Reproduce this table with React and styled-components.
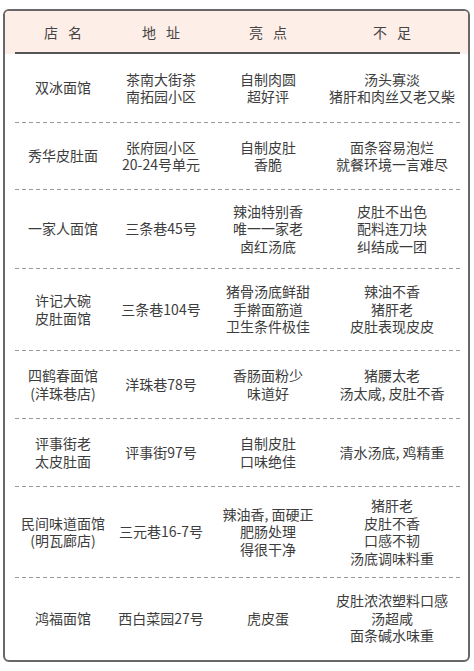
import React from "react";
import styled, { createGlobalStyle } from "styled-components";

const GlobalStyle = createGlobalStyle`
  html, body {
    margin: 0;
    padding: 0;
    background: #ffffff;
  }
  body {
    font-family: "Noto Sans CJK SC", "Noto Sans", sans-serif;
    color: #3d3d3d;
  }
`;

const Page = styled.div`
  padding: 9px 4px 0 3px;
`;

const Card = styled.div`
  border: 2px solid #676767;
  border-radius: 6px;
  overflow: hidden;
  background: #ffffff;
`;

const Header = styled.div`
  background: #fdeee8;
  padding: 0 8px 0 10px;
`;

const Grid = styled.div`
  display: grid;
  grid-template-columns: 96px 100px 114px 134px;
`;

const HeaderRow = styled(Grid)`
  height: 41px;
  border-bottom: 2px solid #555555;
`;

const HeaderCell = styled.div`
  display: flex;
  align-items: center;
  justify-content: center;
  font-size: 14px;
  color: #454545;
  letter-spacing: 10px;
  padding-left: 10px;
  padding-top: 1px;
`;

const Body = styled.div`
  padding: 0 8px 0 10px;
`;

const Row = styled(Grid)`
  height: ${(p) => p.h}px;
  background-image: ${(p) =>
    p.last
      ? "none"
      : "repeating-linear-gradient(to right, #9a9a9a 0 4px, transparent 4px 7px)"};
  background-size: 100% 1px;
  background-position: left bottom;
  background-repeat: no-repeat;
`;

const Cell = styled.div`
  display: flex;
  flex-direction: column;
  align-items: center;
  justify-content: center;
  font-size: 14px;
  white-space: nowrap;
  padding-bottom: 1px;
`;

const Line = styled.div`
  display: block;
  height: 17.5px;
  line-height: 17.5px;
`;

const rows = [
  { h: 69, name: ["双冰面馆"], addr: ["茶南大街茶", "南拓园小区"], good: ["自制肉圆", "超好评"], bad: ["汤头寡淡", "猪肝和肉丝又老又柴"] },
  { h: 67, name: ["秀华皮肚面"], addr: ["张府园小区", "20-24号单元"], good: ["自制皮肚", "香脆"], bad: ["面条容易泡烂", "就餐环境一言难尽"] },
  { h: 79, name: ["一家人面馆"], addr: ["三条巷45号"], good: ["辣油特别香", "唯一一家老", "卤红汤底"], bad: ["皮肚不出色", "配料连刀块", "纠结成一团"] },
  { h: 82, name: ["许记大碗", "皮肚面馆"], addr: ["三条巷104号"], good: ["猪骨汤底鲜甜", "手擀面筋道", "卫生条件极佳"], bad: ["辣油不香", "猪肝老", "皮肚表现皮皮"] },
  { h: 68, name: ["四鹤春面馆", "(洋珠巷店)"], addr: ["洋珠巷78号"], good: ["香肠面粉少", "味道好"], bad: ["猪腰太老", "汤太咸, 皮肚不香"] },
  { h: 68, name: ["评事街老", "太皮肚面"], addr: ["评事街97号"], good: ["自制皮肚", "口味绝佳"], bad: ["清水汤底, 鸡精重"] },
  { h: 91, name: ["民间味道面馆", "(明瓦廊店)"], addr: ["三元巷16-7号"], good: ["辣油香, 面硬正", "肥肠处理", "得很干净"], bad: ["猪肝老", "皮肚不香", "口感不韧", "汤底调味料重"] },
  { h: 82, name: ["鸿福面馆"], addr: ["西白菜园27号"], good: ["虎皮蛋"], bad: ["皮肚浓浓塑料口感", "汤超咸", "面条碱水味重"] },
];

const Lines = ({ items }) => (
  <Cell>
    {items.map((t, i) => (
      <Line key={i}>{t}</Line>
    ))}
  </Cell>
);

export default function App() {
  return (
    <Page>
      <GlobalStyle />
      <Card>
        <Header>
          <HeaderRow>
            <HeaderCell>店名</HeaderCell>
            <HeaderCell>地址</HeaderCell>
            <HeaderCell>亮点</HeaderCell>
            <HeaderCell>不足</HeaderCell>
          </HeaderRow>
        </Header>
        <Body>
          {rows.map((r, i) => (
            <Row key={i} h={r.h} last={i === rows.length - 1}>
              <Lines items={r.name} />
              <Lines items={r.addr} />
              <Lines items={r.good} />
              <Lines items={r.bad} />
            </Row>
          ))}
        </Body>
      </Card>
    </Page>
  );
}
